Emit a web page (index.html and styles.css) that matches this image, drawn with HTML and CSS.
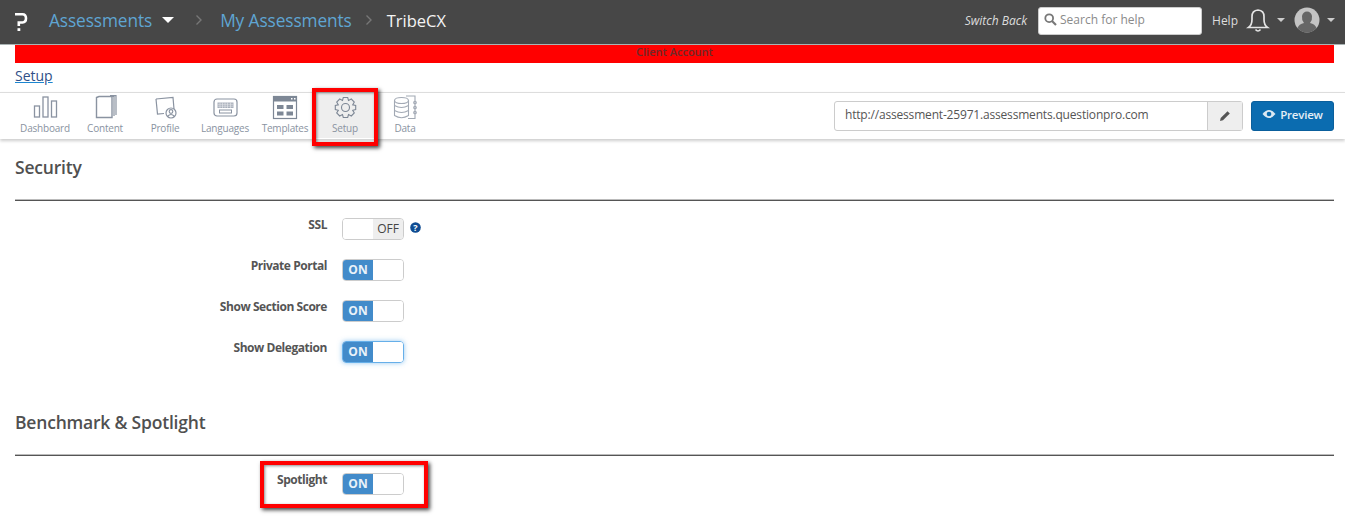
FILE: index.html
```html
<!DOCTYPE html>
<html lang="en">
<head>
<meta charset="utf-8">
<title>Setup</title>
<link rel="stylesheet" href="styles.css">
</head>
<body>
<header class="topbar">
  <svg class="logo" width="14" height="20" viewBox="0 0 14 20"><path d="M0 3.300H7.500Q11 3.300 11 7.300T7.500 11.500H3.800V15" fill="none" stroke="#fff" stroke-width="2.600"/><rect x="2.500" y="17.200" width="2.800" height="2.800" fill="#fff"/></svg>
  <a class="crumb first">Assessments</a>
  <span class="caret big"></span>
  <svg class="chev chev1" width="8" height="12" viewBox="0 0 8 12"><path d="M1.500 1.500L6 6L1.500 10.500" fill="none" stroke="#777" stroke-width="1.400"/></svg>
  <a class="crumb">My Assessments</a>
  <svg class="chev chev2" width="8" height="12" viewBox="0 0 8 12"><path d="M1.500 1.500L6 6L1.500 10.500" fill="none" stroke="#777" stroke-width="1.400"/></svg>
  <span class="current">TribeCX</span>
  <div class="top-right">
    <em class="switch">Switch Back</em>
    <div class="search">
      <svg width="13" height="13" viewBox="0 0 13 13"><circle cx="5.200" cy="5.200" r="3.900" fill="none" stroke="#777" stroke-width="1.800"/><path d="M8 8L12 12" stroke="#777" stroke-width="2.200"/></svg>
      <span>Search for help</span>
    </div>
    <span class="help">Help</span>
    <svg class="bell" width="24" height="26" viewBox="0 0 24 26"><path d="M2.500 20.500Q6 18 6 12.500V9.500Q6 3.500 12 3Q18 3.500 18 9.500V12.500Q18 18 21.500 20.500Z" fill="none" stroke="#e4e4e4" stroke-width="1.700"/><path d="M9.500 22.500Q12 25.500 14.500 22.500" fill="none" stroke="#e4e4e4" stroke-width="1.700"/></svg>
    <span class="caret"></span>
    <svg class="avatar" width="26" height="26" viewBox="0 0 26 26"><circle cx="13" cy="13" r="12.500" fill="#c4c4c4"/><path d="M3.500 21Q5 17 10 16Q7.500 13 8 9Q9 4.500 13 4.500T18 9Q18.500 13 16 16Q21 17 22.500 21Q18.500 25.500 13 25.500T3.500 21Z" fill="#666"/></svg>
    <span class="caret"></span>
  </div>
</header>

<div class="alert">Client Account</div>
<div class="page-link"><a>Setup</a></div>

<nav class="toolbar">
  <ul class="tools">
    <li class="tool">
      <svg width="36" height="26" viewBox="0 0 36 26"><g fill="none" stroke="#8a93a1" stroke-width="1.300"><rect x="7.500" y="11" width="5" height="11"/><rect x="16" y="2" width="5" height="20"/><rect x="24.500" y="6" width="5" height="16"/></g></svg>
      <span>Dashboard</span>
    </li>
    <li class="tool">
      <svg width="36" height="26" viewBox="0 0 36 26"><g fill="none" stroke="#8a93a1" stroke-width="1.200"><path d="M9.500 2.500L12 1.500H25V22.500H9.500Z" stroke-width="1.400"/><path d="M25 1.500H27V21"/><path d="M23 .7H29V20"/></g></svg>
      <span>Content</span>
    </li>
    <li class="tool">
      <svg width="36" height="26" viewBox="0 0 36 26"><g fill="none" stroke="#8a93a1" stroke-width="1.200"><path d="M9 4L26 2.500L27 14"/><path d="M9 4L10.500 19L17 18.500"/><circle cx="24" cy="18" r="5"/><circle cx="24" cy="16.500" r="1.800"/><path d="M20.500 21.500Q24 17.500 27.500 21.500"/></g></svg>
      <span>Profile</span>
    </li>
    <li class="tool">
      <svg width="36" height="26" viewBox="0 0 36 26"><rect x="7" y="4" width="23" height="17" rx="3" fill="none" stroke="#8a93a1" stroke-width="1.200"/><rect x="10.500" y="7.500" width="16" height="5.500" fill="#a9b0bb"/><path d="M10.500 9.300H26.500M10.500 11.200H26.500M13 7.500V13M15.500 7.500V13M18 7.500V13M20.500 7.500V13M23.500 7.500V13" stroke="#e8eaed" stroke-width=".6"/><rect x="12.500" y="15" width="12" height="3" fill="none" stroke="#8a93a1"/></svg>
      <span>Languages</span>
    </li>
    <li class="tool">
      <svg width="36" height="26" viewBox="0 0 36 26"><rect x="6.500" y="1.500" width="23" height="22" fill="#fff" stroke="#7d8795" stroke-width="1.200"/><rect x="6.500" y="1.500" width="23" height="5" fill="#7d8795"/><rect x="24" y="3" width="1.500" height="1.500" fill="#fff"/><rect x="27" y="3" width="1.500" height="1.500" fill="#fff"/><rect x="10" y="10" width="6.500" height="4" fill="#7d8795"/><rect x="19.500" y="10" width="6.500" height="4" fill="#7d8795"/><rect x="10" y="16.500" width="6.500" height="4" fill="#7d8795"/><rect x="19.500" y="16.500" width="6.500" height="4" fill="#7d8795"/></svg>
      <span>Templates</span>
    </li>
    <li class="tool active">
      <svg width="36" height="26" viewBox="0 0 36 26"><g fill="none" stroke="#7d8795" stroke-width="1.100"><circle cx="18.500" cy="12.500" r="4"/><path d="M16.300 2.500H20.700L21.500 5.500L24.300 4L27.300 7L25.700 9.800L28.700 10.500V14.500L25.700 15.300L27.300 18L24.300 21L21.500 19.500L20.700 22.500H16.300L15.500 19.500L12.700 21L9.700 18L11.300 15.300L8.300 14.500V10.500L11.300 9.800L9.700 7L12.700 4L15.500 5.500Z"/></g></svg>
      <span>Setup</span>
    </li>
    <li class="tool">
      <svg width="36" height="26" viewBox="0 0 36 26"><g fill="none" stroke="#a2a9b4" stroke-width="1.100"><ellipse cx="14.500" cy="5.500" rx="7" ry="3"/><path d="M7.500 5.500V20.500Q14.500 25 21.500 20.500V5.500"/><path d="M7.500 10.500Q14.500 14.500 21.500 10.500M7.500 15.500Q14.500 19.500 21.500 15.500"/><path d="M19 1H28V23.500H21"/><circle cx="28" cy="7.500" r="1.300"/><circle cx="28" cy="12.500" r="1.300"/><circle cx="28" cy="17.500" r="1.300"/></g></svg>
      <span>Data</span>
    </li>
  </ul>
  <div class="url-group">
    <span class="url">http://assessment-25971.assessments.questionpro.com</span>
    <span class="edit"><svg width="12" height="12" viewBox="0 0 12 12"><path d="M1 11L1.700 8L8.500 1.200L10.800 3.500L4 10.300Z" fill="#555"/></svg></span>
  </div>
  <button class="preview"><svg width="14" height="10" viewBox="0 0 14 10"><path d="M.5 5Q7-3 13.500 5Q7 13 .5 5Z" fill="#dbe8f2"/><circle cx="7" cy="5" r="2.300" fill="#0b6cb0"/></svg>Preview</button>
</nav>

<main class="content">
  <section class="security">
    <h2>Security</h2>
    <div class="form-row">
      <label>SSL</label>
      <div class="toggle off"><span class="blank"></span><span class="state">OFF</span></div>
      <svg class="hint" width="11" height="11" viewBox="0 0 11 11"><circle cx="5.500" cy="5.500" r="5.300" fill="#0f4c92"/><text x="5.500" y="8.800" text-anchor="middle" class="hint-q">?</text></svg>
    </div>
    <div class="form-row">
      <label>Private Portal</label>
      <div class="toggle"><span class="state">ON</span><span class="blank"></span></div>
    </div>
    <div class="form-row">
      <label>Show Section Score</label>
      <div class="toggle"><span class="state">ON</span><span class="blank"></span></div>
    </div>
    <div class="form-row">
      <label>Show Delegation</label>
      <div class="toggle focus"><span class="state">ON</span><span class="blank"></span></div>
    </div>
  </section>
  <section class="benchmark">
    <h2>Benchmark &amp; Spotlight</h2>
    <div class="form-row">
      <label>Spotlight</label>
      <div class="toggle"><span class="state">ON</span><span class="blank"></span></div>
    </div>
  </section>
</main>

<div class="mark mark-setup"></div>
<div class="mark mark-spot"></div>
</body>
</html>
```

FILE: styles.css
```css
* { box-sizing: border-box; }
html, body { margin: 0; padding: 0; height: 530px; overflow: hidden; }
body { position: relative; background: #fff; font-family: "Open Sans", "Noto Sans", sans-serif; color: #545454; }
a { cursor: pointer; }

.topbar { height: 45px; background: #474747; border-bottom: 1px solid #a9b3b3; display: flex; align-items: center; padding: 0 10px 2px 15px; }
.logo { margin-right: 20px; }
.crumb { font-size: 17.300px; color: #5fa5d3; letter-spacing: -.1px; margin-bottom: 2px; }
.caret { width: 0; height: 0; border-left: 4px solid transparent; border-right: 4px solid transparent; border-top: 4px solid #ccc; display: inline-block; margin-bottom: 2px; }
.caret.big { border-left-width: 6px; border-right-width: 6px; border-top-width: 6px; border-top-color: #fff; margin-left: 10px; }
.chev1 { margin: 0 17px 2px 21px; }
.chev2 { margin: 0 14px 2px 13px; }
.current { font-size: 16.500px; color: #f4f4f4; margin-bottom: 2px; }
.top-right { margin-left: auto; display: flex; align-items: center; }
.switch { font-size: 12px; color: #ddd; margin: 0 11px 2px 0; }
.search { width: 164px; height: 28px; background: #fff; border: 1px solid #ccc; border-radius: 3px; display: flex; align-items: center; gap: 3px; padding: 0 0 3px 5px; font-size: 12px; color: #8a8a8a; }
.help { font-size: 12px; color: #ddd; margin: 0 8px 2px 10px; }
.bell { margin: 0 7px 3px 0; }
.avatar { margin: 0 7px 3px 9px; }

.alert { height: 18px; margin: 0 11px 0 15px; background: #f00; text-align: center; font-size: 11px; line-height: 13px; font-weight: 600; color: #6e2a2a; }
.page-link { height: 29px; padding: 3px 15px 0; font-size: 14px; line-height: 19px; color: #2f4f87; }
.page-link a { text-decoration: underline; text-decoration-color: #1c86d1; }

.toolbar { height: 47px; border-top: 1px solid #ddd; box-shadow: 0 2px 3px rgba(0,0,0,.2); display: flex; align-items: center; padding: 0 11px 1px 0; position: relative; }
.tools { list-style: none; display: flex; margin: 0 0 0 15px; padding: 0; height: 100%; align-self: flex-start; }
.tool { width: 60px; display: flex; flex-direction: column; align-items: center; padding-top: 2px; font-size: 10px; color: #8a93a1; letter-spacing: -.2px; white-space: nowrap; }
.tool span { line-height: 14px; }
.tool.active { background: #eee; }
.url-group { margin-left: auto; width: 409px; height: 30px; border: 1px solid #ccc; border-radius: 3px; display: flex; font-size: 12px; color: #555; }
.url { flex: 1; padding-left: 10px; line-height: 25px; white-space: nowrap; letter-spacing: -.18px; }
.edit { width: 35px; background: #eee; border-left: 1px solid #ccc; display: flex; align-items: center; justify-content: center; }
.preview { margin-left: 8px; width: 83px; height: 30px; background: #0b6cb0; border: 1px solid #0a5f9c; border-radius: 3px; color: #e4eef6; font: 600 11.500px "Open Sans", sans-serif; display: flex; align-items: center; justify-content: center; gap: 4px; padding: 0 0 3px; letter-spacing: -.2px; }

.content { padding: 0 11px 0 15px; }
h2 { margin: 0; font-size: 17.500px; font-weight: 600; line-height: 24px; color: #505050; border-bottom: 1px solid #555; box-shadow: 0 1px 0 #fff, inset 0 -1px 0 #bbb; letter-spacing: -.2px; box-sizing: content-box; }
.security h2 { padding-top: 16px; margin-bottom: 17px; height: 45px; }
.benchmark { margin-top: 9px; }
.benchmark h2 { padding-top: 19px; margin-bottom: 17px; height: 45px; }
.form-row { display: flex; align-items: flex-start; height: 41px; }
.form-row label { width: 312px; margin-top: -1px; text-align: right; font-size: 12px; font-weight: 700; line-height: 16px; color: #555; letter-spacing: -.45px; white-space: nowrap; }
.toggle { width: 62px; height: 22px; margin-left: 15px; border: 1px solid #ccc; border-radius: 4px; display: flex; overflow: hidden; font-size: 12px; line-height: 20px; font-weight: 700; }
.toggle .state { width: 30px; background: #428bca; color: #eaf2f9; text-align: center; }
.toggle .blank { flex: 1; background: #fff; }
.toggle.off .state { background: #eee; color: #444; font-weight: 400; }
.toggle.focus { border-color: #66afe9; box-shadow: 0 0 5px rgba(102,175,233,.7); }
.hint { margin: 4px 0 0 6px; }
.hint-q { font: 700 9px "Open Sans", sans-serif; fill: #fff; }

.mark { position: absolute; border: 4px solid #f00; box-shadow: 2px 2px 4px rgba(0,0,0,.75), inset 1px 1px 3px rgba(0,0,0,.45); }
.mark-setup { left: 312px; top: 88px; width: 66px; height: 58px; }
.mark-spot { left: 260px; top: 461px; width: 168px; height: 47px; }
```
